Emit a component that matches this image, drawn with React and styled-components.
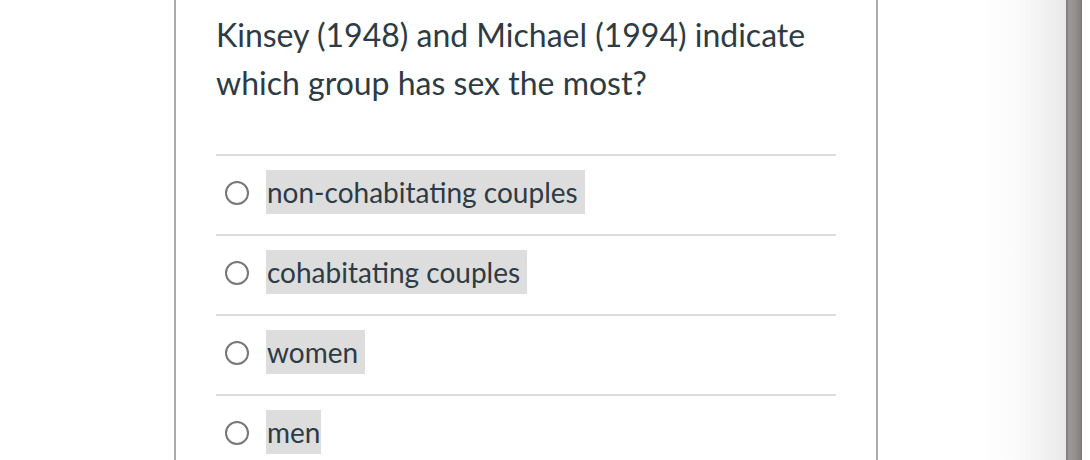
import React from "react";
import styled, { createGlobalStyle } from "styled-components";

const Global = createGlobalStyle`
  html, body { margin: 0; padding: 0; background: #fff; }
  body { font-family: Lato, "Open Sans", sans-serif; color: #2d3b45; }
`;

const Page = styled.div`
  display: flex;
  height: 460px;
  overflow: hidden;
`;

const Main = styled.div`
  flex: 1;
  padding-left: 174px;
`;

const Panel = styled.div`
  width: 620px;
  height: 460px;
  border-left: 2px solid #ababab;
  border-right: 2px solid #ababab;
  padding: 11px 40px 0 40px;
  box-sizing: content-box;
`;

const Question = styled.div`
  font-size: 32px;
  line-height: 48px;
  margin-bottom: 47px;
`;

const List = styled.div`
  display: flex;
  flex-direction: column;
`;

const Row = styled.label`
  display: flex;
  align-items: flex-start;
  gap: 17px;
  height: 80px;
  border-top: 2px solid #dcdcdc;
  padding: 14px 0 0 9px;
  box-sizing: border-box;
`;

const Radio = styled.span`
  width: 24px;
  height: 24px;
  margin-top: 11px;
  border: 2px solid #777;
  border-radius: 50%;
  box-sizing: border-box;
  flex: none;
`;

const Answer = styled.span`
  display: inline-block;
  background: #dddddd;
  height: 44px;
  line-height: 44px;
  padding: 0 ${(p) => (p.$tight ? 1 : 7)}px 0 1px;
  font-size: 28px;
`;

const Shade = styled.div`
  width: 83px;
  flex: none;
  background: linear-gradient(to right, #ffffff 0%, #fafafa 45%, #e9e9e9 100%);
`;

const Strip = styled.div`
  width: 16px;
  flex: none;
  background: linear-gradient(to right, #7c7a79 0%, #9b9897 20%, #948f8d 60%, #85807e 90%, #777 100%);
`;

const Edge = styled.div`
  width: 8px;
  flex: none;
  background: #fff;
`;

const options = [
  { text: "non-cohabitating couples" },
  { text: "cohabitating couples" },
  { text: "women" },
  { text: "men", tight: true },
];

export default function App() {
  return (
    <>
      <Global />
      <Page>
        <Main>
          <Panel>
            <Question>
              Kinsey (1948) and Michael (1994) indicate which group has sex the most?
            </Question>
            <List>
              {options.map((o) => (
                <Row key={o.text}>
                  <Radio />
                  <Answer $tight={o.tight}>{o.text}</Answer>
                </Row>
              ))}
            </List>
          </Panel>
        </Main>
        <Shade />
        <Strip />
        <Edge />
      </Page>
    </>
  );
}
